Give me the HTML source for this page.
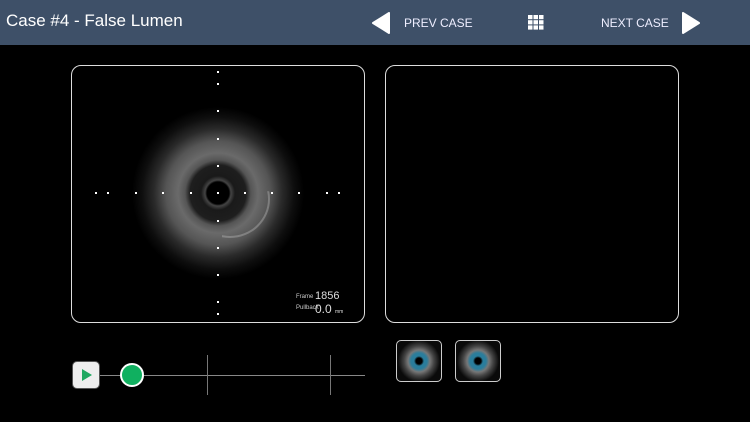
<!DOCTYPE html>
<html><head><style>
html,body{margin:0;padding:0;background:#000;width:750px;height:422px;overflow:hidden;font-family:"Liberation Sans",sans-serif}
.hdr{position:absolute;left:0;top:0;width:750px;height:45px;background:#3e5068;color:#fff}
.t{position:absolute;left:6px;top:11px;font-size:17px}
.s{position:absolute;top:16px;font-size:12px;color:#eef}
.panel{position:absolute;border:1.5px solid #ddd;border-radius:10px;background:#000;box-sizing:border-box}
.d{position:absolute;width:2px;height:2px;background:#fff}
.ring{position:absolute;left:128px;top:103px;width:180px;height:180px;border-radius:50%;
background:radial-gradient(circle at 50% 50%,#000 0,#000 11px,#444 13px,#1a1a1a 17px,#1e1e1e 28px,#555 33px,#6a6a6a 40px,#555 52px,#2a2a2a 64px,#0e0e0e 76px,rgba(0,0,0,0) 86px)}
.thumb{position:absolute;top:340px;width:46px;height:42px;border:1.5px solid #ccc;border-radius:5px;box-sizing:border-box;background:radial-gradient(circle at 50% 50%,#000 0,#000 3px,#2a7d9c 5px,#2a7d9c 8px,#777 11px,#444 15px,#0a0a0a 21px)}
</style></head><body>
<div class="hdr">
<div class="t">Case #4 - False Lumen</div>
<svg style="position:absolute;left:371px;top:12px" width="20" height="22"><path d="M18 1 L18 21 L2 11 Z" fill="#fff" stroke="#fff" stroke-linejoin="round" stroke-width="2"/></svg>
<div class="s" style="left:404px">PREV CASE</div>
<svg style="position:absolute;left:528px;top:15px" width="16" height="15" fill="#fff"><rect x="0" y="0" width="4.5" height="4.2"/><rect x="5.5" y="0" width="4.5" height="4.2"/><rect x="11" y="0" width="4.5" height="4.2"/><rect x="0" y="5.2" width="4.5" height="4.2"/><rect x="5.5" y="5.2" width="4.5" height="4.2"/><rect x="11" y="5.2" width="4.5" height="4.2"/><rect x="0" y="10.4" width="4.5" height="4.2"/><rect x="5.5" y="10.4" width="4.5" height="4.2"/><rect x="11" y="10.4" width="4.5" height="4.2"/></svg>
<div class="s" style="left:601px">NEXT CASE</div>
<svg style="position:absolute;left:681px;top:12px" width="20" height="22"><path d="M2 1 L2 21 L18 11 Z" fill="#fff" stroke="#fff" stroke-linejoin="round" stroke-width="2"/></svg>
</div>
<div class="panel" style="left:71px;top:65px;width:294px;height:258px"></div>
<div class="ring"></div>
<div style="position:absolute;left:190px;top:160px;width:80px;height:78px;border-radius:50%;border:2px solid rgba(200,200,200,0.35);box-sizing:border-box;clip-path:inset(40% 0 0 40%)"></div>
<div class="d" style="left:217px;top:192px"></div>
<div class="d" style="left:217px;top:71px"></div><div class="d" style="left:217px;top:83px"></div><div class="d" style="left:217px;top:110px"></div><div class="d" style="left:217px;top:138px"></div><div class="d" style="left:217px;top:165px"></div><div class="d" style="left:217px;top:220px"></div><div class="d" style="left:217px;top:247px"></div><div class="d" style="left:217px;top:274px"></div><div class="d" style="left:217px;top:301px"></div><div class="d" style="left:217px;top:313px"></div>
<div class="d" style="left:95px;top:192px"></div><div class="d" style="left:107px;top:192px"></div><div class="d" style="left:135px;top:192px"></div><div class="d" style="left:162px;top:192px"></div><div class="d" style="left:190px;top:192px"></div><div class="d" style="left:244px;top:192px"></div><div class="d" style="left:271px;top:192px"></div><div class="d" style="left:298px;top:192px"></div><div class="d" style="left:326px;top:192px"></div><div class="d" style="left:338px;top:192px"></div>
<div style="position:absolute;left:296px;top:294px;font-size:6px;color:#ccc">Frame</div>
<div style="position:absolute;left:315px;top:290px;font-size:11px;color:#ddd">1856</div>
<div style="position:absolute;left:296px;top:305px;font-size:6px;color:#ccc">Pullback</div>
<div style="position:absolute;left:315px;top:302px;font-size:12px;color:#ddd">0.0 <span style="font-size:5px">mm</span></div>
<div class="panel" style="left:385px;top:65px;width:294px;height:258px"></div>
<div style="position:absolute;left:100px;top:375px;width:265px;height:1px;background:#888"></div>
<div style="position:absolute;left:207px;top:355px;width:1px;height:40px;background:#777"></div>
<div style="position:absolute;left:330px;top:355px;width:1px;height:40px;background:#777"></div>
<div style="position:absolute;left:72px;top:361px;width:28px;height:28px;border-radius:5px;background:#eee;border:1.5px solid #555;box-sizing:border-box"></div>
<svg style="position:absolute;left:81px;top:368px" width="12" height="14"><path d="M1 1 L11 7 L1 13 Z" fill="#1fa860"/></svg>
<div style="position:absolute;left:120px;top:363px;width:20px;height:20px;border-radius:50%;background:#10b060;border:2.5px solid #fff"></div>
<div class="thumb" style="left:396px"></div>
<div class="thumb" style="left:455px"></div>
</body></html>
